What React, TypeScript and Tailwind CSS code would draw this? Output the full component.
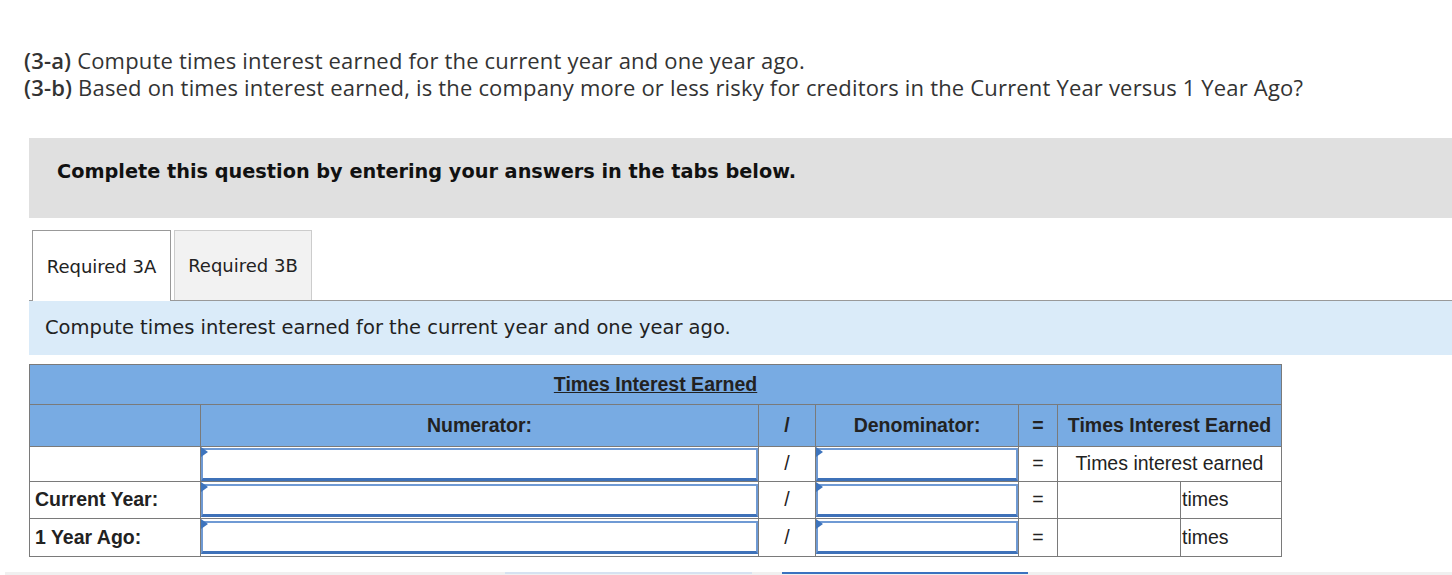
import React from "react";

const prose = { fontFamily: "'Open Sans', Lato, sans-serif" };
const verdana = { fontFamily: "'DejaVu Sans', Verdana, sans-serif" };
const arial = { fontFamily: "'Liberation Sans', Arial, sans-serif" };

function Marker() {
  return (
    <svg
      className="absolute left-0 top-0"
      width="7"
      height="10"
      viewBox="0 0 7 10"
    >
      <path d="M0 0 L7 5 L0 10 Z" fill="#3d74bd" />
    </svg>
  );
}

function InputCell() {
  return (
    <td className="relative border border-[#7a7a7a] p-0">
      <div className="h-full min-h-[33px] border-2 border-[#6f9ad4] border-b-[3px] border-b-[#3e71b8] bg-white" />
      <Marker />
    </td>
  );
}

const rows = [
  { label: "", result: "header" },
  { label: "Current Year:", result: "times" },
  { label: "1 Year Ago:", result: "times" },
];

export default function App() {
  return (
    <div className="min-h-[575px] w-[1452px] overflow-hidden bg-white">
      <div
        className="pl-[24px] pt-[47px] text-[22px] leading-[27px] tracking-[0.18px] text-[#333]"
        style={prose}
      >
        <p>
          <b className="font-semibold">(3-a)</b> Compute times interest earned for the current year and one year ago.
        </p>
        <p>
          <b className="font-semibold">(3-b)</b> Based on times interest earned, is the company more or less risky for creditors in the Current Year versus 1 Year Ago?
        </p>
      </div>

      <div className="ml-[29px] mt-[37px]">
        <div
          className="h-[80px] bg-[#e0e0e0] pl-[28px] pt-[20px] text-[19.3px] font-bold text-[#111]"
          style={verdana}
        >
          Complete this question by entering your answers in the tabs below.
        </div>

        <div className="mt-[12px] flex items-end border-b border-[#999]" style={verdana}>
          <div className="-mb-px ml-[3px] flex h-[71px] w-[139px] items-center justify-center border border-b-0 border-[#999] bg-white text-[18px] text-[#222]">
            Required 3A
          </div>
          <div className="ml-[3px] flex h-[70px] w-[138px] items-center justify-center border border-b-0 border-[#ccc] bg-[#f2f2f2] text-[18px] text-[#222]">
            Required 3B
          </div>
        </div>

        <div
          className="flex h-[54px] items-center bg-[#daebf9] pl-[16px] text-[19.5px] text-[#222]"
          style={verdana}
        >
          Compute times interest earned for the current year and one year ago.
        </div>

        <table
          className="mt-[9px] w-[1252px] table-fixed border-collapse text-[19.5px] text-[#222]"
          style={arial}
        >
          <colgroup>
            <col className="w-[171px]" />
            <col className="w-[558px]" />
            <col className="w-[57px]" />
            <col className="w-[203px]" />
            <col className="w-[39px]" />
            <col className="w-[123px]" />
            <col className="w-[101px]" />
          </colgroup>
          <thead>
            <tr className="h-[40px] bg-[#78abe3]">
              <th colSpan={7} className="border border-[#7a7a7a] font-bold underline">
                Times Interest Earned
              </th>
            </tr>
            <tr className="h-[42px] bg-[#78abe3] font-bold">
              <th className="border border-[#7a7a7a]"></th>
              <th className="border border-[#7a7a7a]">Numerator:</th>
              <th className="border border-[#7a7a7a]">/</th>
              <th className="border border-[#7a7a7a]">Denominator:</th>
              <th className="border border-[#7a7a7a]">=</th>
              <th colSpan={2} className="border border-[#7a7a7a]">
                Times Interest Earned
              </th>
            </tr>
          </thead>
          <tbody>
            {rows.map((r, i) => (
              <tr key={i} className={i === 0 ? "h-[35px]" : i === 1 ? "h-[37px]" : "h-[38px]"}>
                <td className="border border-[#7a7a7a] pl-[5px] font-bold">{r.label}</td>
                <InputCell />
                <td className="border border-[#7a7a7a] text-center">/</td>
                <InputCell />
                <td className="border border-[#7a7a7a] text-center">=</td>
                {r.result === "header" ? (
                  <td colSpan={2} className="border border-[#7a7a7a] text-center">
                    Times interest earned
                  </td>
                ) : (
                  <>
                    <td className="border border-[#7a7a7a]"></td>
                    <td className="border border-[#7a7a7a] pl-[1px]">times</td>
                  </>
                )}
              </tr>
            ))}
          </tbody>
        </table>
      </div>

      <div className="ml-[5px] mt-[15px] flex h-[4px] bg-[#f0f0f0]">
        <div className="ml-[500px] h-[2px] w-[247px] bg-[#d6e2f1]" />
        <div className="ml-[30px] h-[2px] w-[246px] bg-[#3a72bf]" />
      </div>
    </div>
  );
}
